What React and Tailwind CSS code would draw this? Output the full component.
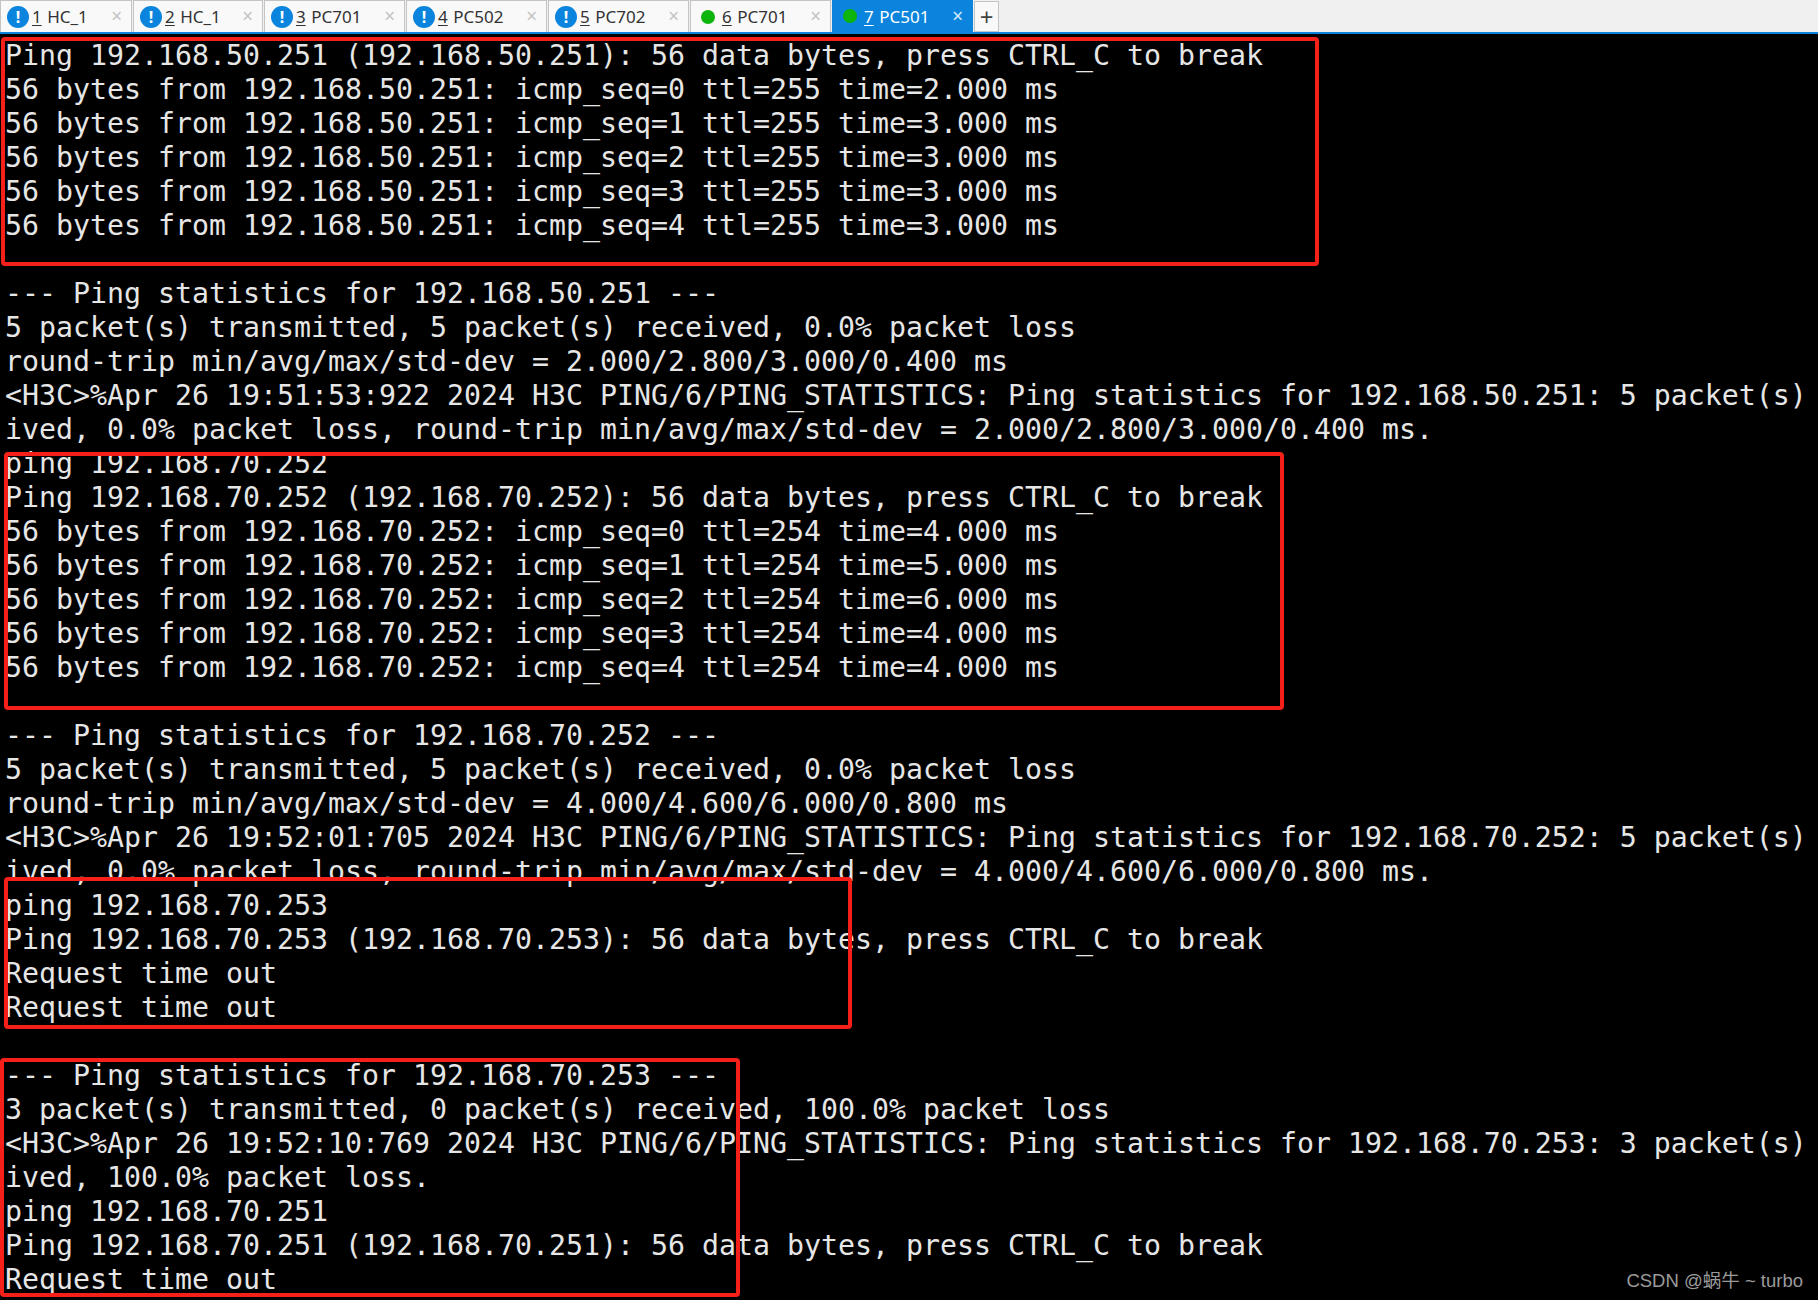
const tabs = [
  { n: '1', name: 'HC_1', w: 'w-[132px]', status: 'alert' },
  { n: '2', name: 'HC_1', w: 'w-[130px]', status: 'alert' },
  { n: '3', name: 'PC701', w: 'w-[141px]', status: 'alert' },
  { n: '4', name: 'PC502', w: 'w-[141px]', status: 'alert' },
  { n: '5', name: 'PC702', w: 'w-[141px]', status: 'alert' },
  { n: '6', name: 'PC701', w: 'w-[141px]', status: 'ok' },
  { n: '7', name: 'PC501', w: 'w-[141px]', status: 'ok', active: true },
];

const lines = [
  'Ping 192.168.50.251 (192.168.50.251): 56 data bytes, press CTRL_C to break',
  '56 bytes from 192.168.50.251: icmp_seq=0 ttl=255 time=2.000 ms',
  '56 bytes from 192.168.50.251: icmp_seq=1 ttl=255 time=3.000 ms',
  '56 bytes from 192.168.50.251: icmp_seq=2 ttl=255 time=3.000 ms',
  '56 bytes from 192.168.50.251: icmp_seq=3 ttl=255 time=3.000 ms',
  '56 bytes from 192.168.50.251: icmp_seq=4 ttl=255 time=3.000 ms',
  '',
  '--- Ping statistics for 192.168.50.251 ---',
  '5 packet(s) transmitted, 5 packet(s) received, 0.0% packet loss',
  'round-trip min/avg/max/std-dev = 2.000/2.800/3.000/0.400 ms',
  '<H3C>%Apr 26 19:51:53:922 2024 H3C PING/6/PING_STATISTICS: Ping statistics for 192.168.50.251: 5 packet(s)',
  'ived, 0.0% packet loss, round-trip min/avg/max/std-dev = 2.000/2.800/3.000/0.400 ms.',
  'ping 192.168.70.252',
  'Ping 192.168.70.252 (192.168.70.252): 56 data bytes, press CTRL_C to break',
  '56 bytes from 192.168.70.252: icmp_seq=0 ttl=254 time=4.000 ms',
  '56 bytes from 192.168.70.252: icmp_seq=1 ttl=254 time=5.000 ms',
  '56 bytes from 192.168.70.252: icmp_seq=2 ttl=254 time=6.000 ms',
  '56 bytes from 192.168.70.252: icmp_seq=3 ttl=254 time=4.000 ms',
  '56 bytes from 192.168.70.252: icmp_seq=4 ttl=254 time=4.000 ms',
  '',
  '--- Ping statistics for 192.168.70.252 ---',
  '5 packet(s) transmitted, 5 packet(s) received, 0.0% packet loss',
  'round-trip min/avg/max/std-dev = 4.000/4.600/6.000/0.800 ms',
  '<H3C>%Apr 26 19:52:01:705 2024 H3C PING/6/PING_STATISTICS: Ping statistics for 192.168.70.252: 5 packet(s)',
  'ived, 0.0% packet loss, round-trip min/avg/max/std-dev = 4.000/4.600/6.000/0.800 ms.',
  'ping 192.168.70.253',
  'Ping 192.168.70.253 (192.168.70.253): 56 data bytes, press CTRL_C to break',
  'Request time out',
  'Request time out',
  '',
  '--- Ping statistics for 192.168.70.253 ---',
  '3 packet(s) transmitted, 0 packet(s) received, 100.0% packet loss',
  '<H3C>%Apr 26 19:52:10:769 2024 H3C PING/6/PING_STATISTICS: Ping statistics for 192.168.70.253: 3 packet(s)',
  'ived, 100.0% packet loss.',
  'ping 192.168.70.251',
  'Ping 192.168.70.251 (192.168.70.251): 56 data bytes, press CTRL_C to break',
  'Request time out',
];

function StatusIcon({ status }) {
  if (status === 'ok') {
    return (
      <span className="flex h-[22px] w-[22px] shrink-0 items-center justify-center">
        <span className="h-[14px] w-[14px] rounded-full bg-[#0cb40c]" />
      </span>
    );
  }
  return (
    <span className="flex h-[22px] w-[22px] shrink-0 items-center justify-center rounded-full bg-[#0a84dc] text-[16px] font-bold leading-none text-white">
      !
    </span>
  );
}

function Tab({ n, name, w, status, active }) {
  return (
    <div
      className={`flex h-[32px] shrink-0 items-center border pl-[6px] pr-[5px] ${w} ${
        active ? 'border-[#0a84dc] bg-[#0a84dc] text-white' : 'border-[#c4c4c4] border-b-0 bg-[#f9f9f9] text-[#333333]'
      }`}
    >
      <StatusIcon status={status} />
      <span className="ml-[3px] whitespace-nowrap text-[17px] leading-none">
        <span className="mr-[1px] underline underline-offset-2">{n}</span> {name}
      </span>
      <span className={`ml-auto mr-[4px] text-[19px] leading-none ${active ? 'text-[#d6ecfb]' : 'text-[#c4c4c4]'}`}>×</span>
    </div>
  );
}

export default function App() {
  return (
    <div className="relative h-[1300px] w-[1818px] overflow-hidden bg-black font-['Noto_Sans','Open_Sans',sans-serif]">
      <div className="flex h-[34px] items-start gap-[1px] border-b-2 border-[#0a84dc] bg-[#f0f0f0]">
        {tabs.map((tab) => (
          <Tab key={tab.n} {...tab} />
        ))}
        <div className="mt-[1px] flex h-[31px] w-[25px] items-center justify-center border border-[#c4c4c4] bg-[#f9f9f9] text-[24px] leading-none text-[#444444]">
          +
        </div>
      </div>

      <div className="pl-[5px] pt-[5px] font-['DejaVu_Sans_Mono',monospace] text-[28.24px] leading-[34px] text-[#e6e6e6]">
        {lines.map((line, i) => (
          <div key={i} className="h-[34px] whitespace-pre">
            {line}
          </div>
        ))}
      </div>

      {/* red annotation boxes drawn over the terminal */}
      <div className="absolute left-[1px] top-[37px] h-[229px] w-[1318px] rounded-[4px] border-[4px] border-[#f5201a]" />
      <div className="absolute left-[4px] top-[452px] h-[258px] w-[1280px] rounded-[4px] border-[4px] border-[#f5201a]" />
      <div className="absolute left-[4px] top-[877px] h-[152px] w-[848px] rounded-[4px] border-[4px] border-[#f5201a]" />
      <div className="absolute left-[0px] top-[1058px] h-[239px] w-[740px] rounded-[4px] border-[4px] border-[#f5201a]" />

      <div className="absolute bottom-[7px] right-[15px] font-['Liberation_Sans','Noto_Sans_CJK_SC',sans-serif] text-[18.5px] leading-[24px] text-[#9b9b9b]">
        CSDN @蜗牛 ~ turbo
      </div>
    </div>
  );
}
